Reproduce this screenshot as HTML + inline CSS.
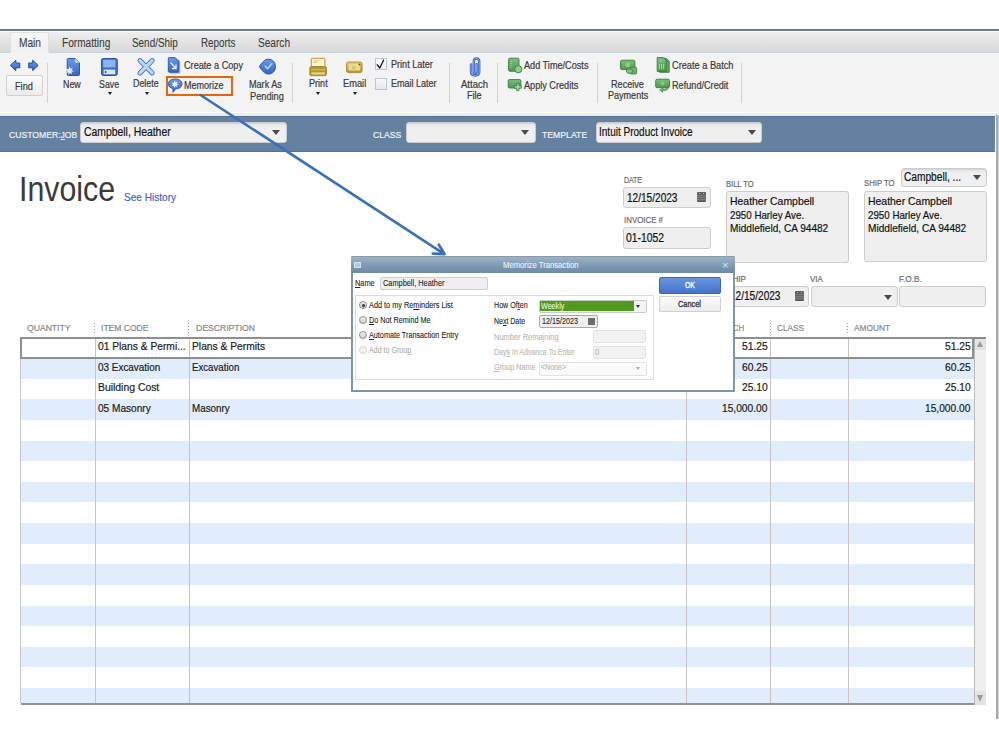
<!DOCTYPE html>
<html><head><meta charset="utf-8"><style>
*{margin:0;padding:0;box-sizing:border-box}
html,body{width:999px;height:749px;overflow:hidden;background:#fff;position:relative;font-family:"Liberation Sans",sans-serif}
.a{position:absolute}
.t{position:absolute;white-space:pre;line-height:1;font-family:"Liberation Sans",sans-serif;-webkit-text-stroke:0.2px currentColor}
.t u{text-decoration:underline;text-underline-offset:1px}
.sep{position:absolute;width:1px;background:#d3d3d3}
.dd{position:absolute;background:linear-gradient(#e6e6e6,#f0f0f0 30%,#efefef);border:1px solid #c9ccd0;border-radius:3px;box-shadow:inset 0 1px 1px rgba(0,0,0,.08)}
.fld{position:absolute;background:#efefef;border:1px solid #cdcdcd;border-radius:3px}
.tri{position:absolute;width:0;height:0;border-left:4px solid transparent;border-right:4px solid transparent;border-top:5px solid #4a4a4a}
.tris{position:absolute;width:0;height:0;border-left:2.5px solid transparent;border-right:2.5px solid transparent;border-top:3.5px solid #222}
.row{position:absolute;left:21px;width:953px;background:#e1edfc}
.col{position:absolute;top:339px;height:364px;width:1px;background:#c6c6c6}
.dot{position:absolute;width:1px;height:10px;background:repeating-linear-gradient(#9a9a9a 0 1px,transparent 1px 3px)}
.cal{position:absolute;width:9px;height:10px;border-radius:1px;background:linear-gradient(#606060 0 3px,transparent 3px),repeating-linear-gradient(#666 0 1px,#7c7c7c 1px 2px);box-shadow:inset 0 -1px #555}
.cal::before{content:'';position:absolute;left:2px;top:1px;width:1px;height:1px;background:#bbb;box-shadow:4px 0 #bbb}
.radio{position:absolute;width:8px;height:8px;border-radius:50%;border:1px solid #8f8f8f;background:linear-gradient(#f0f0f0,#cfcfcf)}

</style></head><body>
<!-- top line -->
<div class="a" style="left:0;top:29px;width:999px;height:2px;background:#6b7e91"></div>
<div class="a" style="left:0;top:32px;width:999px;height:20px;background:linear-gradient(#eeeeee,#d8d8d8)"></div>
<div class="a" style="left:10px;top:32px;width:39px;height:20px;background:linear-gradient(#f5f5f5,#f1f1f1);border:1px solid #e0e0e0;border-bottom:none;border-radius:2px 2px 0 0"></div>
<div class="a" style="left:0;top:52px;width:999px;height:1px;background:#c8d4e0"></div>
<div class="a" style="left:10px;top:52px;width:39px;height:1px;background:#f1f1f1"></div>
<div class="a" style="left:0;top:53px;width:999px;height:59px;background:#f3f3f3"></div>
<div class="a" style="left:0;top:112px;width:999px;height:1px;background:#ffffff"></div>
<div class="a" style="left:0;top:113px;width:999px;height:1px;background:#ebebeb"></div>
<div class="a" style="left:0;top:114px;width:999px;height:2px;background:#efede8"></div>
<!-- blue bar -->
<div class="a" style="left:0;top:116px;width:995px;height:36px;background:#6581a1;border-top:1px solid #52708f;border-bottom:1px solid #52708f"></div>
<div class="a" style="left:996px;top:115px;width:2px;height:604px;background:#a9a9a9"></div><div class="a" style="left:998px;top:115px;width:1px;height:604px;background:#d4d4d4"></div>
<!-- ribbon separators -->
<div class="sep" style="left:47px;top:63px;height:40px"></div>
<div class="sep" style="left:292px;top:63px;height:40px"></div>
<div class="sep" style="left:449px;top:63px;height:40px"></div>
<div class="sep" style="left:497px;top:63px;height:40px"></div>
<div class="sep" style="left:597px;top:63px;height:40px"></div>
<div class="sep" style="left:741px;top:63px;height:40px"></div>
<!-- find button -->
<div class="a" style="left:6px;top:75px;width:37px;height:21px;background:linear-gradient(#fbfbfb,#ececec);border:1px solid #d2d2d2;border-radius:2px"></div>
<!-- small dropdown arrows -->
<div class="tris" style="left:107.5px;top:92px"></div>
<div class="tris" style="left:145px;top:92px"></div>
<div class="tris" style="left:316px;top:92px"></div>
<div class="tris" style="left:352.5px;top:92px"></div>
<!-- checkboxes -->
<div class="a" style="left:375px;top:58px;width:12px;height:12px;background:linear-gradient(#fdfdfd,#eceff3);border:1px solid #bcc6d2"></div>
<div class="a" style="left:375px;top:78px;width:12px;height:12px;background:linear-gradient(#f7f8fb,#e3e8f0);border:1px solid #bcc6d2"></div>
<!-- customer bar dropdowns -->
<div class="dd" style="left:80px;top:122px;width:207px;height:21px"></div>
<div class="tri" style="left:272px;top:130px"></div>
<div class="dd" style="left:406px;top:122px;width:130px;height:21px"></div>
<div class="tri" style="left:521px;top:130px"></div>
<div class="dd" style="left:596px;top:122px;width:166px;height:21px"></div>
<div class="tri" style="left:748px;top:130px"></div>
<!-- header fields -->
<div class="fld" style="left:623px;top:187px;width:88px;height:21px"></div>
<div class="cal" style="left:697px;top:192px"></div>
<div class="fld" style="left:623px;top:227px;width:88px;height:22px"></div>
<div class="fld" style="left:726px;top:191px;width:123px;height:72px"></div>
<div class="dd" style="left:901px;top:168px;width:86px;height:19px"></div>
<div class="tri" style="left:973px;top:175px"></div>
<div class="fld" style="left:864px;top:191px;width:123px;height:71px"></div>
<div class="fld" style="left:721px;top:286px;width:88px;height:21px"></div>
<div class="cal" style="left:795px;top:291px"></div>
<div class="fld" style="left:811px;top:286px;width:87px;height:21px"></div>
<div class="tri" style="left:884px;top:295px"></div>
<div class="fld" style="left:899px;top:286px;width:87px;height:21px"></div>
<!-- table header separators -->
<div class="dot" style="left:94px;top:323px"></div>
<div class="dot" style="left:188px;top:323px"></div>
<div class="dot" style="left:692px;top:323px"></div>
<div class="dot" style="left:770px;top:323px"></div>
<div class="dot" style="left:847px;top:323px"></div>
<!-- table -->
<div class="a" style="left:20px;top:337px;width:966px;height:2px;background:#8a8a8a"></div>
<div class="a" style="left:20px;top:357px;width:1px;height:346px;background:#c6c9cc"></div>
<div class="a" style="left:21px;top:703px;width:954px;height:2px;background:#929292"></div>
<div class="row" style="top:358.12px;height:20.62px"></div>
<div class="row" style="top:399.38px;height:20.62px"></div>
<div class="row" style="top:440.62px;height:20.62px"></div>
<div class="row" style="top:481.88px;height:20.62px"></div>
<div class="row" style="top:523.12px;height:20.62px"></div>
<div class="row" style="top:564.38px;height:20.62px"></div>
<div class="row" style="top:605.62px;height:20.62px"></div>
<div class="row" style="top:646.88px;height:20.62px"></div>
<div class="row" style="top:688.12px;height:14.88px"></div>
<div class="col" style="left:95px"></div>
<div class="col" style="left:189px"></div>
<div class="col" style="left:686px"></div>
<div class="col" style="left:770px"></div>
<div class="col" style="left:848px"></div>
<!-- selected row border -->
<div class="a" style="left:20px;top:337px;width:954px;height:22px;border:2px solid #8c9092"></div>
<!-- scrollbar -->
<div class="a" style="left:974px;top:339px;width:12px;height:366px;background:#f0f0f0;border-left:1px solid #b9b9b9"></div>
<div class="a" style="left:975px;top:339px;width:11px;height:11px;background:#e3e3e3"></div>
<div class="a" style="left:977px;top:341px;width:0;height:0;border-left:3.5px solid transparent;border-right:3.5px solid transparent;border-bottom:6px solid #9b9b9b"></div>
<div class="a" style="left:975px;top:691px;width:11px;height:14px;background:#e3e3e3"></div>
<div class="a" style="left:977px;top:695px;width:0;height:0;border-left:3.5px solid transparent;border-right:3.5px solid transparent;border-top:7px solid #9b9b9b"></div>

<svg class="a" style="left:0;top:0" width="999" height="120" viewBox="0 0 999 120">
<defs>
<linearGradient id="gb" x1="0" y1="0" x2="0" y2="1"><stop offset="0" stop-color="#6b9be6"/><stop offset="1" stop-color="#3564c4"/></linearGradient>
<linearGradient id="gg" x1="0" y1="0" x2="0" y2="1"><stop offset="0" stop-color="#7cc07e"/><stop offset="1" stop-color="#4b9a50"/></linearGradient>
<linearGradient id="gold" x1="0" y1="0" x2="0" y2="1"><stop offset="0" stop-color="#e6d27a"/><stop offset="1" stop-color="#b09330"/></linearGradient>
</defs>
<!-- back/forward arrows -->
<path d="M10.3,65.4 L15.8,60.2 L15.8,63 L19.8,63 L19.8,67.8 L15.8,67.8 L15.8,70.6 Z" fill="url(#gb)" stroke="#1f4aa6" stroke-width="1" stroke-linejoin="round"/>
<path d="M38.2,65.4 L32.7,60.2 L32.7,63 L28.7,63 L28.7,67.8 L32.7,67.8 L32.7,70.6 Z" fill="url(#gb)" stroke="#1f4aa6" stroke-width="1" stroke-linejoin="round"/>
<!-- New doc -->
<path d="M67.2,59.5 Q67.2,58.5 68.2,58.5 L75.2,58.5 L79.5,63 L79.5,74.5 Q79.5,75.5 78.5,75.5 L68.2,75.5 Q67.2,75.5 67.2,74.5 Z" fill="url(#gb)" stroke="#2b57b4" stroke-width="1"/>
<path d="M75.2,58.8 L75.2,62.8 L79.3,62.8 Z" fill="#c9defa"/>
<path d="M69.6,66.3 L70.4,68.8 L72.9,67.6 L71.6,70.1 L74,71.2 L71.4,71.8 L72.3,74.4 L70,73 L68.6,75.3 L68.4,72.6 L65.8,72.9 L67.6,70.9 L65.8,68.9 L68.5,69.1 Z" fill="#e4efff"/>
<!-- Save floppy -->
<rect x="101.5" y="58.5" width="15.8" height="17" rx="1.8" fill="#3d6dcc" stroke="#2a56b0" stroke-width="1"/>
<rect x="103.2" y="59.8" width="12.3" height="7.6" fill="#8db3ee"/>
<rect x="103.6" y="69.6" width="11.6" height="4.6" fill="#d8e8fc"/>
<circle cx="105.6" cy="72" r="0.9" fill="#1a3e8c"/>
<!-- Delete X -->
<path d="M140,60.6 L152.2,72.9 M152.2,60.6 L140,72.9" stroke="#4a78c8" stroke-width="5" stroke-linecap="round"/>
<path d="M140,60.6 L152.2,72.9 M152.2,60.6 L140,72.9" stroke="#bcd7fa" stroke-width="3.1" stroke-linecap="round"/>
<!-- Create a Copy -->
<path d="M170,59.5 L178.5,59.5 L180.3,62 L180.3,73.6 L170,73.6 Z" fill="#8aaee6"/>
<path d="M168.3,58.3 Q168.3,57.6 169,57.6 L175.2,57.6 L178.6,61.2 L178.6,71.5 Q178.6,72.2 177.9,72.2 L169,72.2 Q168.3,72.2 168.3,71.5 Z" fill="url(#gb)" stroke="#2b57b4" stroke-width="0.9"/>
<path d="M171,63 L175.5,68 M176,64.8 L176,68.5 L172.5,68.5" fill="none" stroke="#e8f2ff" stroke-width="1.3" stroke-linecap="round"/>
<!-- Memorize bubble -->
<path d="M175.3,79 C179.6,79 182,81.2 182,84 C182,86.9 179.4,88.8 175.8,88.8 L173,92.3 L172.8,88.5 C170.2,87.9 168.2,86.3 168.2,84 C168.2,81 171,79 175.3,79 Z" fill="url(#gb)" stroke="#2b57b4" stroke-width="0.9"/>
<path d="M174.8,80.2 L175.6,82.4 L177.9,81.3 L176.8,83.5 L179,84.4 L176.7,85 L177.5,87.3 L175.3,86.1 L174.1,88.2 L173.9,85.9 L171.5,86.1 L173.1,84.4 L171.5,82.6 L173.9,82.8 Z" fill="#eef5ff"/>
<!-- Mark As Pending -->
<path d="M259.4,66.6 C262,62.6 264.5,59.2 268.5,59.2 C272.6,59.2 275.4,62.4 275.4,66.6 C275.4,71 272.6,74 268.5,74 C264.5,74 262,70.6 259.4,66.6 Z" fill="url(#gb)" stroke="#2552ae" stroke-width="1"/>
<path d="M265.2,66.2 L267.6,68.7 L271.7,63.8" fill="none" stroke="#b4d2fb" stroke-width="1.6" stroke-linecap="round" stroke-linejoin="round"/>
<!-- Print -->
<rect x="311.3" y="58.3" width="13.6" height="8.6" rx="1" fill="#fbf4d6" stroke="#b8992c" stroke-width="1"/>
<path d="M313.5,60.8 L319,60.8 M313.5,62.5 L317,62.5" stroke="#c9b060" stroke-width="0.7"/>
<rect x="309.8" y="66.5" width="16.6" height="9.2" rx="1.6" fill="#b4962c" stroke="#9a7e20" stroke-width="0.8"/>
<rect x="311" y="69.2" width="14.2" height="1" fill="#d8c070"/>
<rect x="311.3" y="72.3" width="13.6" height="2.2" fill="#e4d490"/>
<!-- Email -->
<rect x="346.5" y="62" width="15.6" height="10.6" rx="2" fill="url(#gold)" stroke="#a88a28" stroke-width="0.9"/>
<rect x="348.5" y="64" width="11.6" height="6.6" rx="1" fill="#eadb94"/>
<path d="M352,67 L356,67 M352,68.7 L355,68.7" stroke="#b09a50" stroke-width="0.6"/>
<circle cx="359.5" cy="64.5" r="1" fill="#6a5410"/>
<!-- check -->
<path d="M377,64.4 L379.8,68 L383.8,59.8" fill="none" stroke="#111" stroke-width="1.3" stroke-linejoin="round"/>
<!-- Paperclip -->
<path d="M471,64.5 L471,72 C471,76.6 479.2,76.6 479.2,72 L479.2,61.8 C479.2,57.4 473.8,57.4 473.8,61.8 L473.8,71 C473.8,73.6 476.6,73.6 476.6,71 L476.6,64" fill="none" stroke="#3a66c0" stroke-width="2.4" stroke-linecap="round"/>
<path d="M471,64.5 L471,72 C471,76.6 479.2,76.6 479.2,72 L479.2,61.8 C479.2,57.4 473.8,57.4 473.8,61.8 L473.8,71 C473.8,73.6 476.6,73.6 476.6,71 L476.6,64" fill="none" stroke="#9ab8ec" stroke-width="0.8" stroke-linecap="round"/>
<!-- Add Time/Costs -->
<rect x="508.6" y="58.2" width="10.4" height="13" rx="1.2" fill="url(#gg)" stroke="#3a7a3e" stroke-width="0.9"/>
<path d="M511,61 L511,69" stroke="#c8e8c8" stroke-width="0.8" stroke-dasharray="1 1"/>
<circle cx="518.3" cy="69.2" r="3.6" fill="#8fce8f" stroke="#3a7a3e" stroke-width="0.9"/>
<!-- Apply Credits -->
<rect x="508.2" y="79.6" width="12.6" height="8.4" rx="1.2" fill="url(#gg)" stroke="#3a7a3e" stroke-width="0.9"/>
<path d="M516.4,84.6 h2.6 v-2.4 h2.4 v2.4 h-0 M516.4,84.6" fill="none"/>
<path d="M516.6,83.4 h2.4 v2.4 h2.4 v2.4 h-2.4 v2.4 h-2.4 v-2.4 h-2.4 v-2.4 h2.4 Z" fill="#9ad89a" stroke="#3a7a3e" stroke-width="0.8"/>
<!-- Receive Payments -->
<rect x="620.5" y="60.2" width="14.4" height="9.4" rx="1.4" fill="url(#gg)" stroke="#3a7a3e" stroke-width="0.9"/>
<circle cx="627.7" cy="64.9" r="2.4" fill="#8ccc8c"/>
<rect x="630" y="67.2" width="6.6" height="6.8" rx="1" fill="#6cb46e" stroke="#3a7a3e" stroke-width="0.8"/>
<ellipse cx="629.6" cy="71" rx="3.3" ry="2.4" fill="#7cc07e" stroke="#3a7a3e" stroke-width="0.8"/>
<!-- Create a Batch -->
<path d="M659.5,58.3 L666,58.3 L669.2,61.3 L669.2,72.3 L659.5,72.3 Z" fill="#5ea862" stroke="#3a7a3e" stroke-width="0.9"/>
<path d="M657.2,57.6 L663.4,57.6 L666.2,60.4 L666.2,71.4 L657.2,71.4 Z" fill="url(#gg)" stroke="#3a7a3e" stroke-width="0.9"/>
<path d="M659.5,61 h3 M659.5,64 v5 M661.5,64 v5 M663.5,64 v5" stroke="#c0e4c0" stroke-width="0.7"/>
<!-- Refund/Credit -->
<rect x="655.7" y="79.2" width="13.8" height="8.4" rx="1.4" fill="url(#gg)" stroke="#3a7a3e" stroke-width="0.9"/>
<circle cx="662.6" cy="83.4" r="1.8" fill="#8ccc8c"/>
<path d="M668.6,87 C668.6,90 665.5,91 662,90.5 L663,92.3 L659.6,89.8 L663,87.8 L662.5,89 C665,89.3 667,88.8 667.6,86.8 Z" fill="#86c888" stroke="#3a7a3e" stroke-width="0.7"/>
</svg>

<div class="t" style="left:18.60px;top:37.00px;font-size:12px;color:#3c3c3c;transform:scaleX(0.845);transform-origin:left top;-webkit-text-stroke:0.1px #3c3c3c">Main</div>
<div class="t" style="left:62.20px;top:37.00px;font-size:12px;color:#3c3c3c;transform:scaleX(0.843);transform-origin:left top;-webkit-text-stroke:0.1px #3c3c3c">Formatting</div>
<div class="t" style="left:132.00px;top:37.00px;font-size:12px;color:#3c3c3c;transform:scaleX(0.826);transform-origin:left top;-webkit-text-stroke:0.1px #3c3c3c">Send/Ship</div>
<div class="t" style="left:200.60px;top:37.00px;font-size:12px;color:#3c3c3c;transform:scaleX(0.819);transform-origin:left top;-webkit-text-stroke:0.1px #3c3c3c">Reports</div>
<div class="t" style="left:257.70px;top:37.00px;font-size:12px;color:#3c3c3c;transform:scaleX(0.843);transform-origin:left top;-webkit-text-stroke:0.1px #3c3c3c">Search</div>
<div class="t" style="left:14.60px;top:82.00px;font-size:10px;color:#3a3a3a;transform:scaleX(0.916);transform-origin:left top;">Find</div>
<div class="t" style="left:63.40px;top:80.00px;font-size:10px;color:#3a3a3a;transform:scaleX(0.885);transform-origin:left top;">New</div>
<div class="t" style="left:99.00px;top:80.00px;font-size:10px;color:#3a3a3a;transform:scaleX(0.882);transform-origin:left top;">Save</div>
<div class="t" style="left:132.90px;top:79.00px;font-size:10px;color:#3a3a3a;transform:scaleX(0.889);transform-origin:left top;">Delete</div>
<div class="t" style="left:183.60px;top:61.00px;font-size:10px;color:#3a3a3a;transform:scaleX(0.915);transform-origin:left top;">Create a Copy</div>
<div class="t" style="left:183.80px;top:81.00px;font-size:10px;color:#3a3a3a;transform:scaleX(0.902);transform-origin:left top;">Memorize</div>
<div class="t" style="left:249.30px;top:80.00px;font-size:10px;color:#3a3a3a;transform:scaleX(0.908);transform-origin:left top;">Mark As</div>
<div class="t" style="left:249.70px;top:92.00px;font-size:10px;color:#3a3a3a;transform:scaleX(0.921);transform-origin:left top;">Pending</div>
<div class="t" style="left:308.50px;top:79.00px;font-size:10px;color:#3a3a3a;transform:scaleX(0.909);transform-origin:left top;">Print</div>
<div class="t" style="left:343.00px;top:79.00px;font-size:10px;color:#3a3a3a;transform:scaleX(0.928);transform-origin:left top;">Email</div>
<div class="t" style="left:390.50px;top:60.00px;font-size:10px;color:#3a3a3a;transform:scaleX(0.908);transform-origin:left top;">Print Later</div>
<div class="t" style="left:390.50px;top:79.00px;font-size:10px;color:#3a3a3a;transform:scaleX(0.902);transform-origin:left top;">Email Later</div>
<div class="t" style="left:460.70px;top:80.00px;font-size:10px;color:#3a3a3a;transform:scaleX(0.954);transform-origin:left top;">Attach</div>
<div class="t" style="left:466.60px;top:91.00px;font-size:10px;color:#3a3a3a;transform:scaleX(0.906);transform-origin:left top;">File</div>
<div class="t" style="left:524.40px;top:61.00px;font-size:10px;color:#3a3a3a;transform:scaleX(0.913);transform-origin:left top;">Add Time/Costs</div>
<div class="t" style="left:524.40px;top:81.00px;font-size:10px;color:#3a3a3a;transform:scaleX(0.913);transform-origin:left top;">Apply Credits</div>
<div class="t" style="left:611.00px;top:80.00px;font-size:10px;color:#3a3a3a;transform:scaleX(0.911);transform-origin:left top;">Receive</div>
<div class="t" style="left:607.80px;top:91.00px;font-size:10px;color:#3a3a3a;transform:scaleX(0.904);transform-origin:left top;">Payments</div>
<div class="t" style="left:671.90px;top:61.00px;font-size:10px;color:#3a3a3a;transform:scaleX(0.922);transform-origin:left top;">Create a Batch</div>
<div class="t" style="left:671.90px;top:81.00px;font-size:10px;color:#3a3a3a;transform:scaleX(0.914);transform-origin:left top;">Refund/Credit</div>
<div class="t" style="left:9.00px;top:130.00px;font-size:9.5px;color:#eef2f7;transform:scaleX(0.907);transform-origin:left top;">CUSTOMER:<u>J</u>OB</div>
<div class="t" style="left:373.00px;top:130.00px;font-size:9.5px;color:#eef2f7;transform:scaleX(0.909);transform-origin:left top;">CLASS</div>
<div class="t" style="left:541.70px;top:130.00px;font-size:9.5px;color:#eef2f7;transform:scaleX(0.914);transform-origin:left top;">TEMPLATE</div>
<div class="t" style="left:84.30px;top:126.00px;font-size:12px;color:#111;transform:scaleX(0.866);transform-origin:left top;">Campbell, Heather</div>
<div class="t" style="left:599.17px;top:126.00px;font-size:12px;color:#111;transform:scaleX(0.835);transform-origin:left top;">Intuit Product Invoice</div>
<div class="t" style="left:19.06px;top:172.00px;font-size:34.5px;color:#3a3a3a;transform:scaleX(0.879);transform-origin:left top;-webkit-text-stroke:0">Invoice</div>
<div class="t" style="left:123.50px;top:192.00px;font-size:11.5px;color:#4a64c0;transform:scaleX(0.876);transform-origin:left top;">See History</div>
<div class="t" style="left:624.00px;top:176.00px;font-size:9px;color:#6a6a6a;transform:scaleX(0.771);transform-origin:left top;">DATE</div>
<div class="t" style="left:626.80px;top:192.00px;font-size:12px;color:#111;transform:scaleX(0.840);transform-origin:left top;">12/15/2023</div>
<div class="t" style="left:624.00px;top:216.00px;font-size:9px;color:#6a6a6a;transform:scaleX(0.876);transform-origin:left top;">INVOICE #</div>
<div class="t" style="left:626.00px;top:232.00px;font-size:12px;color:#111;transform:scaleX(0.863);transform-origin:left top;">01-1052</div>
<div class="t" style="left:726.30px;top:180.00px;font-size:9px;color:#6a6a6a;transform:scaleX(0.840);transform-origin:left top;">BILL TO</div>
<div class="t" style="left:729.50px;top:196.00px;font-size:11.5px;color:#111;transform:scaleX(0.908);transform-origin:left top;">Heather Campbell</div>
<div class="t" style="left:729.50px;top:210.00px;font-size:11.5px;color:#111;transform:scaleX(0.848);transform-origin:left top;">2950 Harley Ave.</div>
<div class="t" style="left:729.50px;top:223.00px;font-size:11.5px;color:#111;transform:scaleX(0.878);transform-origin:left top;">Middlefield, CA 94482</div>
<div class="t" style="left:867.50px;top:196.00px;font-size:11.5px;color:#111;transform:scaleX(0.908);transform-origin:left top;">Heather Campbell</div>
<div class="t" style="left:867.50px;top:210.00px;font-size:11.5px;color:#111;transform:scaleX(0.848);transform-origin:left top;">2950 Harley Ave.</div>
<div class="t" style="left:867.50px;top:223.00px;font-size:11.5px;color:#111;transform:scaleX(0.878);transform-origin:left top;">Middlefield, CA 94482</div>
<div class="t" style="left:863.80px;top:179.00px;font-size:9px;color:#6a6a6a;transform:scaleX(0.859);transform-origin:left top;">SHIP TO</div>
<div class="t" style="left:904.20px;top:171.00px;font-size:12px;color:#111;transform:scaleX(0.847);transform-origin:left top;">Campbell, ...</div>
<div class="t" style="left:726.70px;top:275.00px;font-size:9px;color:#6a6a6a;transform:scaleX(0.905);transform-origin:left top;">SHIP</div>
<div class="t" style="left:730.30px;top:290.00px;font-size:12px;color:#111;transform:scaleX(0.840);transform-origin:left top;">12/15/2023</div>
<div class="t" style="left:810.00px;top:275.00px;font-size:9px;color:#6a6a6a;transform:scaleX(0.883);transform-origin:left top;">VIA</div>
<div class="t" style="left:898.80px;top:275.00px;font-size:9px;color:#6a6a6a;transform:scaleX(0.906);transform-origin:left top;">F.O.B.</div>
<div class="t" style="left:27.00px;top:324.00px;font-size:9px;color:#8a8a8a;transform:scaleX(0.956);transform-origin:left top;">QUANTITY</div>
<div class="t" style="left:101.30px;top:324.00px;font-size:9px;color:#8a8a8a;transform:scaleX(0.950);transform-origin:left top;">ITEM CODE</div>
<div class="t" style="left:195.50px;top:324.00px;font-size:9px;color:#8a8a8a;transform:scaleX(0.959);transform-origin:left top;">DESCRIPTION</div>
<div class="t" style="left:696.00px;top:324.00px;font-size:9px;color:#8a8a8a;transform:scaleX(0.875);transform-origin:left top;">PRICE EACH</div>
<div class="t" style="left:776.70px;top:324.00px;font-size:9px;color:#8a8a8a;transform:scaleX(0.918);transform-origin:left top;">CLASS</div>
<div class="t" style="left:854.00px;top:324.00px;font-size:9px;color:#8a8a8a;transform:scaleX(0.922);transform-origin:left top;">AMOUNT</div>
<div class="t" style="left:97.50px;top:341.00px;font-size:11.5px;color:#1a1a1a;transform:scaleX(0.891);transform-origin:left top;">01 Plans &amp; Permi...</div>
<div class="t" style="left:192.20px;top:341.00px;font-size:11.5px;color:#1a1a1a;transform:scaleX(0.893);transform-origin:left top;">Plans &amp; Permits</div>
<div class="t" style="left:741.50px;top:341.00px;font-size:11.5px;color:#1a1a1a;transform:scaleX(0.895);transform-origin:left top;">51.25</div>
<div class="t" style="left:944.60px;top:341.00px;font-size:11.5px;color:#1a1a1a;transform:scaleX(0.895);transform-origin:left top;">51.25</div>
<div class="t" style="left:97.50px;top:362.00px;font-size:11.5px;color:#1a1a1a;transform:scaleX(0.863);transform-origin:left top;">03 Excavation</div>
<div class="t" style="left:192.20px;top:362.00px;font-size:11.5px;color:#1a1a1a;transform:scaleX(0.841);transform-origin:left top;">Excavation</div>
<div class="t" style="left:741.50px;top:362.00px;font-size:11.5px;color:#1a1a1a;transform:scaleX(0.895);transform-origin:left top;">60.25</div>
<div class="t" style="left:944.60px;top:362.00px;font-size:11.5px;color:#1a1a1a;transform:scaleX(0.895);transform-origin:left top;">60.25</div>
<div class="t" style="left:97.50px;top:382.00px;font-size:11.5px;color:#1a1a1a;transform:scaleX(0.904);transform-origin:left top;">Building Cost</div>
<div class="t" style="left:741.50px;top:382.00px;font-size:11.5px;color:#1a1a1a;transform:scaleX(0.895);transform-origin:left top;">25.10</div>
<div class="t" style="left:944.60px;top:382.00px;font-size:11.5px;color:#1a1a1a;transform:scaleX(0.895);transform-origin:left top;">25.10</div>
<div class="t" style="left:97.50px;top:403.00px;font-size:11.5px;color:#1a1a1a;transform:scaleX(0.878);transform-origin:left top;">05 Masonry</div>
<div class="t" style="left:192.20px;top:403.00px;font-size:11.5px;color:#1a1a1a;transform:scaleX(0.857);transform-origin:left top;">Masonry</div>
<div class="t" style="left:721.90px;top:403.00px;font-size:11.5px;color:#1a1a1a;transform:scaleX(0.886);transform-origin:left top;">15,000.00</div>
<div class="t" style="left:925.00px;top:403.00px;font-size:11.5px;color:#1a1a1a;transform:scaleX(0.886);transform-origin:left top;">15,000.00</div>
<div class="a" style="left:351px;top:256px;width:384px;height:136px;background:#fff;border:2px solid #7f95ac;border-top:none;border-radius:2px 2px 0 0"></div>
<div class="a" style="left:351px;top:256px;width:384px;height:17px;background:linear-gradient(#9cb2c7,#7893ae 70%,#6f8ba8);border-top:1px solid #8d9aa6;border-radius:2px 2px 0 0"></div>
<div class="a" style="left:354px;top:262px;width:7px;height:6px;background:#b9c9d8;border:1px solid #d7e1ea"></div>
<div class="t" style="left:722px;top:260px;font-size:11px;color:#dce5ee;-webkit-text-stroke:0">×</div>
<div class="fld" style="left:380px;top:277px;width:108px;height:13px;border-radius:2px;border-color:#cfcfcf"></div>
<div class="a" style="left:355px;top:295px;width:299px;height:85px;border:1px solid #dcdcdc"></div>
<div class="radio" style="left:359px;top:301px"></div>
<div class="a" style="left:361.5px;top:303.5px;width:3px;height:3px;border-radius:50%;background:#333"></div>
<div class="radio" style="left:359px;top:316px"></div>
<div class="radio" style="left:359px;top:331px"></div>
<div class="radio" style="left:359px;top:346px;border-color:#d2d2d2;background:#f4f4f4"></div>
<div class="a" style="left:539px;top:300px;width:108px;height:13px;background:#f4f4f4;border:1px solid #cbcbcb;border-radius:2px"></div>
<div class="a" style="left:540px;top:301px;width:94px;height:10px;background:#4f9a1f"></div>
<div class="tris" style="left:636px;top:305px;border-top-color:#333"></div>
<div class="a" style="left:539px;top:315px;width:59px;height:13px;background:#efefef;border:1px solid #a9a9a9;border-radius:2px"></div>
<div class="a" style="left:588px;top:318px;width:7px;height:7px;background:#6d6d6d"></div>
<div class="a" style="left:593px;top:330px;width:53px;height:13px;background:#f2f2f2;border:1px solid #e2e2e2;border-radius:2px"></div>
<div class="a" style="left:593px;top:346px;width:53px;height:13px;background:#f2f2f2;border:1px solid #e2e2e2;border-radius:2px"></div>
<div class="a" style="left:539px;top:362px;width:108px;height:14px;background:#fbfbfb;border:1px solid #e3e3e3;border-radius:2px"></div>
<div class="tris" style="left:636px;top:367px;border-top-color:#aaa"></div>
<div class="a" style="left:659px;top:277px;width:62px;height:17px;background:linear-gradient(#6a95de,#4373cb);border:1px solid #3c66b5;border-radius:2px"></div>
<div class="a" style="left:659px;top:296px;width:62px;height:16px;background:linear-gradient(#fbfbfb,#ececec);border:1px solid #d0d0d0;border-radius:2px"></div>

<div class="t" style="left:503.40px;top:261.00px;font-size:8.5px;color:#eef2f6;transform:scaleX(0.904);transform-origin:left top;-webkit-text-stroke:0.1px currentColor">Memorize Transaction</div>
<div class="t" style="left:355.00px;top:279.00px;font-size:8.5px;color:#262626;transform:scaleX(0.863);transform-origin:left top;-webkit-text-stroke:0.1px currentColor"><u>N</u>ame</div>
<div class="t" style="left:383.00px;top:279.00px;font-size:8.5px;color:#262626;transform:scaleX(0.867);transform-origin:left top;-webkit-text-stroke:0.1px currentColor">Campbell, Heather</div>
<div class="t" style="left:369.00px;top:301.00px;font-size:8.5px;color:#262626;transform:scaleX(0.861);transform-origin:left top;-webkit-text-stroke:0.1px currentColor">Add to my Re<u>m</u>inders List</div>
<div class="t" style="left:369.00px;top:316.00px;font-size:8.5px;color:#262626;transform:scaleX(0.852);transform-origin:left top;-webkit-text-stroke:0.1px currentColor"><u>D</u>o Not Remind Me</div>
<div class="t" style="left:369.00px;top:331.00px;font-size:8.5px;color:#262626;transform:scaleX(0.851);transform-origin:left top;-webkit-text-stroke:0.1px currentColor"><u>A</u>utomate Transaction Entry</div>
<div class="t" style="left:369.00px;top:346.00px;font-size:8.5px;color:#b0b0b0;transform:scaleX(0.834);transform-origin:left top;-webkit-text-stroke:0.1px currentColor">Add to Grou<u>p</u></div>
<div class="t" style="left:494.10px;top:301.00px;font-size:8.5px;color:#262626;transform:scaleX(0.836);transform-origin:left top;-webkit-text-stroke:0.1px currentColor">How Of<u>t</u>en</div>
<div class="t" style="left:540.70px;top:302.00px;font-size:8.5px;color:#eaf5dc;transform:scaleX(0.843);transform-origin:left top;-webkit-text-stroke:0.1px currentColor">Weekly</div>
<div class="t" style="left:494.00px;top:317.00px;font-size:8.5px;color:#262626;transform:scaleX(0.822);transform-origin:left top;-webkit-text-stroke:0.1px currentColor">Ne<u>x</u>t Date</div>
<div class="t" style="left:542.00px;top:317.00px;font-size:8.5px;color:#262626;transform:scaleX(0.846);transform-origin:left top;-webkit-text-stroke:0.1px currentColor">12/15/2023</div>
<div class="t" style="left:494.00px;top:333.00px;font-size:8.5px;color:#b8b8b8;transform:scaleX(0.879);transform-origin:left top;-webkit-text-stroke:0.1px currentColor">Number Rema<u>i</u>ning</div>
<div class="t" style="left:494.00px;top:348.00px;font-size:8.5px;color:#b8b8b8;transform:scaleX(0.825);transform-origin:left top;-webkit-text-stroke:0.1px currentColor">Day<u>s</u> In Advance To Enter</div>
<div class="t" style="left:595.00px;top:348.00px;font-size:8.5px;color:#b8b8b8;transform:scaleX(0.910);transform-origin:left top;-webkit-text-stroke:0.1px currentColor">0</div>
<div class="t" style="left:494.00px;top:363.00px;font-size:8.5px;color:#b8b8b8;transform:scaleX(0.854);transform-origin:left top;-webkit-text-stroke:0.1px currentColor"><u>G</u>roup Name</div>
<div class="t" style="left:541.40px;top:363.00px;font-size:8.5px;color:#b8b8b8;transform:scaleX(0.829);transform-origin:left top;-webkit-text-stroke:0.1px currentColor">&lt;None&gt;</div>
<div class="t" style="left:684.50px;top:281.00px;font-size:8.5px;color:#ffffff;transform:scaleX(0.793);transform-origin:left top;-webkit-text-stroke:0.35px #fff">OK</div>
<div class="t" style="left:677.70px;top:300.00px;font-size:8.5px;color:#3a3a3a;transform:scaleX(0.866);transform-origin:left top;-webkit-text-stroke:0.35px #3a3a3a">Cancel</div>
<div class="a" style="left:166px;top:76px;width:67px;height:20px;border:2px solid #e8650c"></div>
<svg class="a" style="left:0;top:0" width="999" height="749" viewBox="0 0 999 749">
<line x1="200.5" y1="95" x2="444" y2="253.8" stroke="#3c70ba" stroke-width="2.6" stroke-linecap="round"/>
<polyline points="438.8,244.8 444.5,254 432.8,253.6" fill="none" stroke="#3c70ba" stroke-width="2.8" stroke-linecap="round" stroke-linejoin="round"/>
</svg>

</body></html>
